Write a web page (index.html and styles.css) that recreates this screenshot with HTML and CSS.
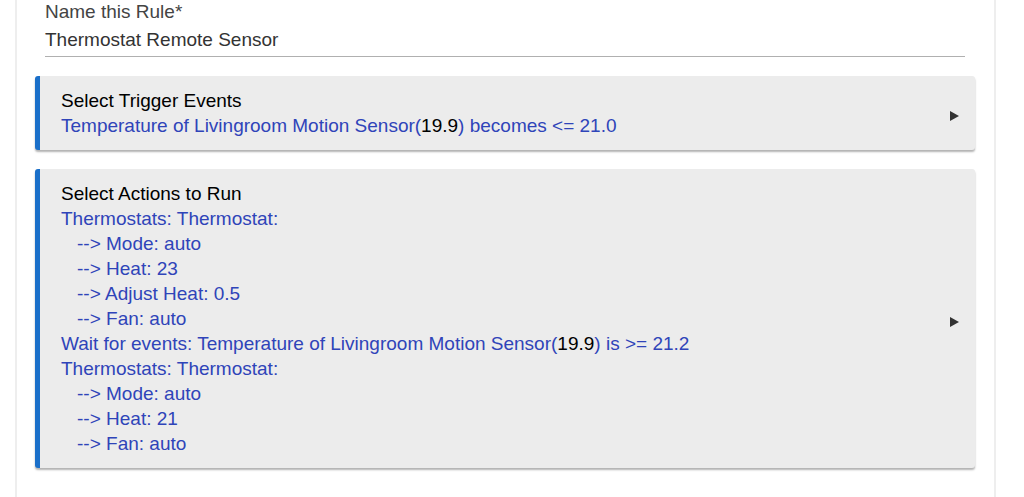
FILE: index.html
```html
<!DOCTYPE html>
<html lang="en">

<head>
    <meta charset="UTF-8">
    <meta name="viewport" content="width=device-width, initial-scale=1.0">
    <title>Rule Machine</title>
    <link rel="stylesheet" href="styles.css">
</head>

<body>
    <div class="page">
        <div class="field">
            <div class="label">Name this Rule*</div>
            <div class="input">Thermostat Remote Sensor</div>
        </div>

        <div class="card">
            <div class="body">
                <div class="title">Select Trigger Events</div>
                <div class="desc">Temperature of Livingroom Motion Sensor(<span class="val">19.9</span>) becomes &lt;= 21.0</div>
            </div>
            <div class="arrow"></div>
        </div>

        <div class="card">
            <div class="body">
                <div class="title">Select Actions to Run</div>
                <div class="desc">Thermostats: Thermostat:</div>
                <div class="desc sub">--&gt; Mode: auto</div>
                <div class="desc sub">--&gt; Heat: 23</div>
                <div class="desc sub">--&gt; Adjust Heat: 0.5</div>
                <div class="desc sub">--&gt; Fan: auto</div>
                <div class="desc">Wait for events: Temperature of Livingroom Motion Sensor(<span class="val">19.9</span>) is &gt;= 21.2</div>
                <div class="desc">Thermostats: Thermostat:</div>
                <div class="desc sub">--&gt; Mode: auto</div>
                <div class="desc sub">--&gt; Heat: 21</div>
                <div class="desc sub">--&gt; Fan: auto</div>
            </div>
            <div class="arrow"></div>
        </div>
    </div>
</body>

</html>
```

FILE: styles.css
```css
body {
    margin: 0;
    background-color: white;
    font-family: "Liberation Sans", Arial, sans-serif;
    font-size: 19px;
}

.page {
    margin-left: 15px;
    width: 977px;
    height: 497px;
    border-left: 2px solid #eeeeee;
    border-right: 2px solid #eeeeee;
}

.field {
    padding: 0 29px 0 28px;
}

.label {
    line-height: 24px;
    color: #444;
}

.input {
    line-height: 24px;
    padding: 4px 0;
    color: #333;
    border-bottom: 1px solid #b0b0b0;
}

.card {
    margin: 19px 19px 0 18px;
    display: flex;
    align-items: center;
    background-color: #ececec;
    border-left: 5px solid #1a6fc9;
    border-radius: 3px;
    box-shadow: 0 2px 2px rgba(0, 0, 0, 0.3);
}

.body {
    flex: 1;
    padding: 12px 21px;
    line-height: 25px;
}

.title {
    color: black;
}

.desc {
    color: #2f44b9;
}

.sub {
    padding-left: 16px;
}

.val {
    color: black;
}

.arrow {
    width: 0;
    height: 0;
    margin-right: 16px;
    margin-top: 6px;
    border-top: 5px solid transparent;
    border-bottom: 5px solid transparent;
    border-left: 9px solid #333;
}
```
